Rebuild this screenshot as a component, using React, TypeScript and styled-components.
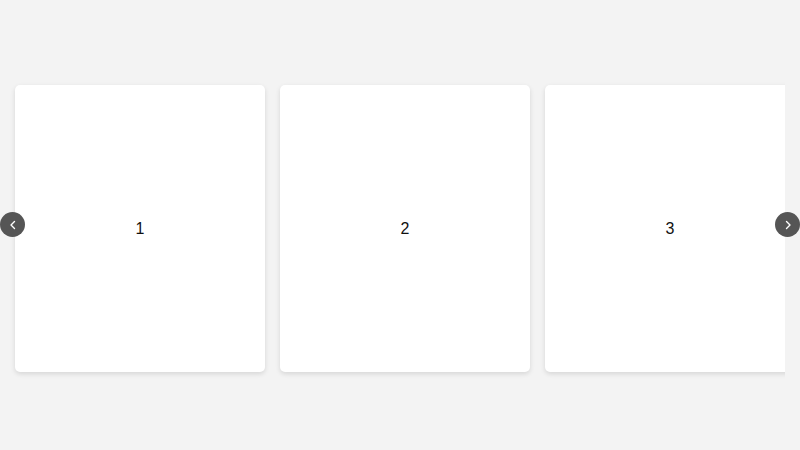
import React, { useState } from 'react';
import styled, { createGlobalStyle } from 'styled-components';

const GlobalStyle = createGlobalStyle`
  html, body {
    margin: 0;
    padding: 0;
    background: #f3f3f3;
    font-family: "Liberation Sans", Arial, sans-serif;
  }
`;

const Page = styled.div`
  width: 800px;
  height: 450px;
  position: relative;
  overflow: hidden;
  padding-top: 85px;
  box-sizing: border-box;
`;

const Viewport = styled.div`
  width: 785px;
  overflow: hidden;
  margin-top: -10px;
  padding: 10px 0;
`;

const Track = styled.div`
  display: flex;
  gap: 15px;
  padding-left: 15px;
`;

const Card = styled.div`
  flex: 0 0 250px;
  height: 287px;
  background: #fff;
  border-radius: 5px;
  box-shadow: 0 2px 5px rgba(0, 0, 0, 0.12);
  display: flex;
  align-items: center;
  justify-content: center;
  font-size: 16px;
  color: #111;
`;

const Arrow = styled.button<{ $side: 'left' | 'right' }>`
  position: absolute;
  top: 212px;
  ${(p) => (p.$side === 'left' ? 'left: 0;' : 'right: 0;')}
  width: 25px;
  height: 25px;
  border-radius: 50%;
  border: none;
  padding: 0;
  background: #555;
  display: flex;
  align-items: center;
  justify-content: center;
  cursor: pointer;
`;

const Chevron = ({ dir }: { dir: 'left' | 'right' }) => (
  <svg width="10" height="10" viewBox="0 0 10 10" fill="none">
    <path
      d={dir === 'left' ? 'M6.5 1.5 L3 5 L6.5 8.5' : 'M3.5 1.5 L7 5 L3.5 8.5'}
      stroke="#fff"
      strokeWidth="1.4"
      strokeLinecap="round"
      strokeLinejoin="round"
    />
  </svg>
);

const items = ['1', '2', '3'];

const App: React.FC = () => {
  const [index, setIndex] = useState(0);

  const prev = () => setIndex((i) => Math.max(0, i - 1));
  const next = () => setIndex((i) => Math.min(items.length - 1, i + 1));

  return (
    <>
      <GlobalStyle />
      <Page>
        <Viewport>
          <Track style={{ transform: `translateX(${-index * 265}px)` }}>
            {items.map((item) => (
              <Card key={item}>{item}</Card>
            ))}
          </Track>
        </Viewport>
        <Arrow $side="left" onClick={prev} aria-label="Previous">
          <Chevron dir="left" />
        </Arrow>
        <Arrow $side="right" onClick={next} aria-label="Next">
          <Chevron dir="right" />
        </Arrow>
      </Page>
    </>
  );
};

export default App;
